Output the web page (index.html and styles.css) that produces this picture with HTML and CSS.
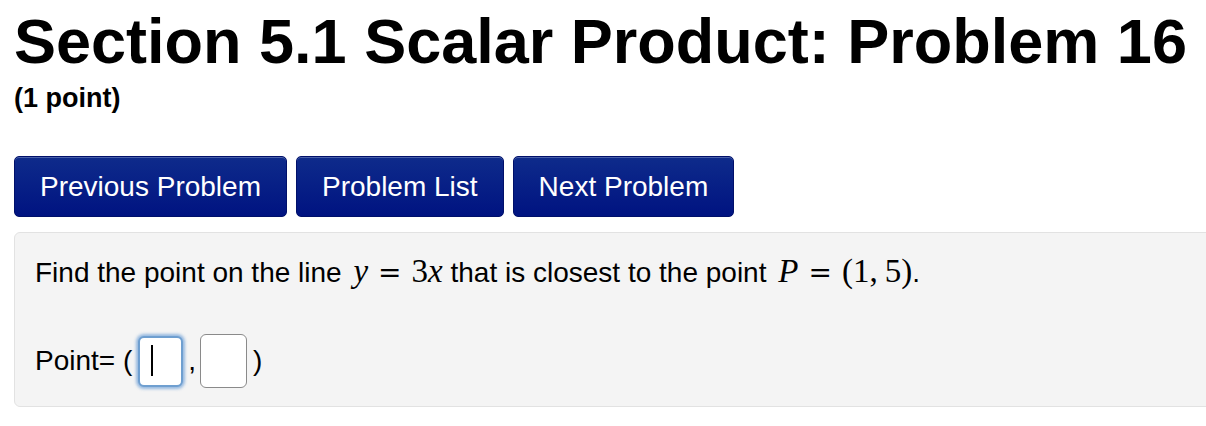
FILE: index.html
```html
<!DOCTYPE html>
<html>
<head>
<meta charset="utf-8">
<link rel="stylesheet" href="styles.css">
</head>
<body>
<h1 class="title">Section 5.1 Scalar Product: Problem 16</h1>
<div class="points">(1 point)</div>
<div class="nav">
  <a class="btn">Previous Problem</a>
  <a class="btn">Problem List</a>
  <a class="btn">Next Problem</a>
</div>
<div class="panel">
  <p class="q">Find the point on the line <span class="m"><i class="v">y</i><span class="eq">=</span>3<i>x</i></span> that is closest to the point <span class="m"><i class="v">P</i><span class="eq">=</span>(1,<span class="sp"></span>5)</span>.</p>
  <p class="ans">Point= (<span class="box focus"><span class="caret"></span></span>,<span class="box"></span>)</p>
</div>
</body>
</html>
```
FILE: styles.css
```css
html, body {
  margin: 0;
  padding: 0;
  background: #fff;
  overflow: hidden;
}
body {
  font-family: "Liberation Sans", Arial, sans-serif;
  color: #000;
  padding: 0 0 0 14px;
  width: 1192px;
}
.title {
  font-size: 63px;
  font-weight: bold;
  line-height: 1;
  margin: 0;
  padding-top: 10px;
  white-space: nowrap;
}
.points {
  font-size: 27px;
  font-weight: bold;
  line-height: 30px;
  margin-top: 10px;
}
.nav {
  display: flex;
  gap: 9px;
  margin-top: 43px;
}
.btn {
  display: block;
  color: #fff;
  font-size: 28px;
  line-height: 31px;
  padding: 14px 25px;
  border-radius: 5px;
  border: 1px solid #00106a;
  background: linear-gradient(#0e2b8b, #001381);
  box-shadow: inset 0 1px 0 rgba(255,255,255,0.25);
}
.panel {
  margin-top: 15px;
  width: 1210px;
  height: 175px;
  background: #f4f4f4;
  border: 1px solid #e2e2e2;
  border-radius: 6px;
  padding: 0 20px;
  box-sizing: border-box;
  font-size: 28px;
}
.q {
  margin: 0;
  padding-top: 20px;
  line-height: 36px;
  white-space: nowrap;
}
.m {
  font-family: "Liberation Serif", "Times New Roman", serif;
  font-size: 33px;
}
.v {
  margin-left: 4px;
}
.eq {
  font-family: "DejaVu Serif", serif;
  font-size: 28px;
  padding: 0 10px;
}
.sp {
  display: inline-block;
  width: 7px;
}
.ans {
  margin: 0;
  margin-top: 43px;
  display: flex;
  align-items: center;
  line-height: 36px;
}
.box {
  display: inline-block;
  width: 47px;
  height: 54px;
  box-sizing: border-box;
  border: 1.5px solid #8a8a8a;
  border-radius: 6px;
  background: #fff;
  margin: 0 6px 0 4px;
  position: relative;
}
.box.focus {
  border: 2px solid #6f9fd0;
  box-shadow: 0 0 3px 2px rgba(110,160,215,0.7);
  width: 45px;
  height: 51px;
  margin: 0 5px 0 6px;
}
.caret {
  position: absolute;
  left: 11px;
  top: 7px;
  width: 2px;
  height: 31px;
  background: #000;
}
```
